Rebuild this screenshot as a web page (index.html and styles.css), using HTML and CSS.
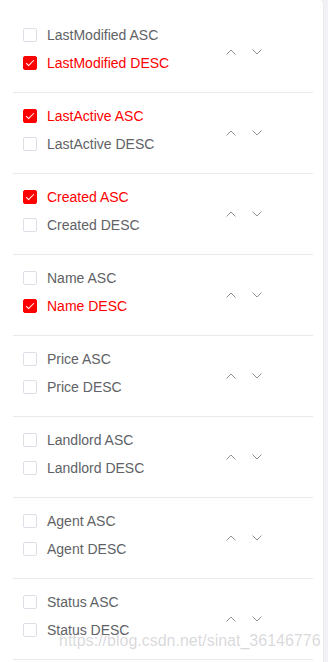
FILE: index.html
```html
<!DOCTYPE html>
<html>
<head>
<meta charset="utf-8">
<link rel="stylesheet" href="styles.css">
</head>
<body>
<div class="panel">
  <div class="group">
    <div class="options">
      <label class="opt"><span class="box"></span><span class="txt">LastModified ASC</span></label>
      <label class="opt on"><span class="box"></span><span class="txt">LastModified DESC</span></label>
    </div>
    <div class="arrows">
      <svg class="arr" viewBox="0 0 10 6"><path d="M0.5 5.5 L5 1 L9.5 5.5"/></svg>
      <svg class="arr" viewBox="0 0 10 6"><path d="M0.5 0.5 L5 5 L9.5 0.5"/></svg>
    </div>
  </div>
  <div class="group">
    <div class="options">
      <label class="opt on"><span class="box"></span><span class="txt">LastActive ASC</span></label>
      <label class="opt"><span class="box"></span><span class="txt">LastActive DESC</span></label>
    </div>
    <div class="arrows">
      <svg class="arr" viewBox="0 0 10 6"><path d="M0.5 5.5 L5 1 L9.5 5.5"/></svg>
      <svg class="arr" viewBox="0 0 10 6"><path d="M0.5 0.5 L5 5 L9.5 0.5"/></svg>
    </div>
  </div>
  <div class="group">
    <div class="options">
      <label class="opt on"><span class="box"></span><span class="txt">Created ASC</span></label>
      <label class="opt"><span class="box"></span><span class="txt">Created DESC</span></label>
    </div>
    <div class="arrows">
      <svg class="arr" viewBox="0 0 10 6"><path d="M0.5 5.5 L5 1 L9.5 5.5"/></svg>
      <svg class="arr" viewBox="0 0 10 6"><path d="M0.5 0.5 L5 5 L9.5 0.5"/></svg>
    </div>
  </div>
  <div class="group">
    <div class="options">
      <label class="opt"><span class="box"></span><span class="txt">Name ASC</span></label>
      <label class="opt on"><span class="box"></span><span class="txt">Name DESC</span></label>
    </div>
    <div class="arrows">
      <svg class="arr" viewBox="0 0 10 6"><path d="M0.5 5.5 L5 1 L9.5 5.5"/></svg>
      <svg class="arr" viewBox="0 0 10 6"><path d="M0.5 0.5 L5 5 L9.5 0.5"/></svg>
    </div>
  </div>
  <div class="group">
    <div class="options">
      <label class="opt"><span class="box"></span><span class="txt">Price ASC</span></label>
      <label class="opt"><span class="box"></span><span class="txt">Price DESC</span></label>
    </div>
    <div class="arrows">
      <svg class="arr" viewBox="0 0 10 6"><path d="M0.5 5.5 L5 1 L9.5 5.5"/></svg>
      <svg class="arr" viewBox="0 0 10 6"><path d="M0.5 0.5 L5 5 L9.5 0.5"/></svg>
    </div>
  </div>
  <div class="group">
    <div class="options">
      <label class="opt"><span class="box"></span><span class="txt">Landlord ASC</span></label>
      <label class="opt"><span class="box"></span><span class="txt">Landlord DESC</span></label>
    </div>
    <div class="arrows">
      <svg class="arr" viewBox="0 0 10 6"><path d="M0.5 5.5 L5 1 L9.5 5.5"/></svg>
      <svg class="arr" viewBox="0 0 10 6"><path d="M0.5 0.5 L5 5 L9.5 0.5"/></svg>
    </div>
  </div>
  <div class="group">
    <div class="options">
      <label class="opt"><span class="box"></span><span class="txt">Agent ASC</span></label>
      <label class="opt"><span class="box"></span><span class="txt">Agent DESC</span></label>
    </div>
    <div class="arrows">
      <svg class="arr" viewBox="0 0 10 6"><path d="M0.5 5.5 L5 1 L9.5 5.5"/></svg>
      <svg class="arr" viewBox="0 0 10 6"><path d="M0.5 0.5 L5 5 L9.5 0.5"/></svg>
    </div>
  </div>
  <div class="group">
    <div class="options">
      <label class="opt"><span class="box"></span><span class="txt">Status ASC</span></label>
      <label class="opt"><span class="box"></span><span class="txt">Status DESC</span></label>
    </div>
    <div class="arrows">
      <svg class="arr" viewBox="0 0 10 6"><path d="M0.5 5.5 L5 1 L9.5 5.5"/></svg>
      <svg class="arr" viewBox="0 0 10 6"><path d="M0.5 0.5 L5 5 L9.5 0.5"/></svg>
    </div>
  </div>
  <div class="watermark">https://blog.csdn.net/sinat_36146776</div>
</div>
</body>
</html>
```

FILE: styles.css
```css
html, body {
  margin: 0;
  padding: 0;
  background: #f2f2f6;
  height: 100%;
  overflow: hidden;
}

body {
  font-family: "Liberation Sans", Arial, sans-serif;
  font-size: 14px;
}

.panel {
  position: relative;
  width: 324px;
  height: 662px;
  box-sizing: border-box;
  background: #fff;
  border-radius: 0 4px 0 0;
  border-right: 1px solid #e9e9ee;
  padding-top: 12px;
}

.group {
  display: flex;
  align-items: center;
  margin: 0 10px 0 13px;
  padding: 9px 0 15px 10px;
  border-bottom: 1px solid #e8e9ee;
}

.options {
  flex: 0 0 203px;
  display: flex;
  flex-direction: column;
}

.opt {
  display: flex;
  align-items: center;
  height: 28px;
  color: #606266;
  cursor: pointer;
}

.opt.on {
  color: #ff0000;
}

.box {
  position: relative;
  width: 14px;
  height: 14px;
  box-sizing: border-box;
  border: 1px solid #dcdfe6;
  border-radius: 2px;
  background: #fff;
  margin-right: 10px;
  flex: 0 0 auto;
}

.opt.on .box {
  background: #ff0000;
  border-color: #ff0000;
}

.opt.on .box::after {
  content: "";
  position: absolute;
  box-sizing: content-box;
  left: 4px;
  top: 1px;
  width: 3px;
  height: 7px;
  border: 1px solid #fff;
  border-left: 0;
  border-top: 0;
  transform: rotate(45deg);
}

.txt {
  line-height: 28px;
}

.arrows {
  display: flex;
  gap: 16px;
  padding-top: 6px;
}

.arr {
  width: 10px;
  height: 6px;
  display: block;
}

.arr path {
  fill: none;
  stroke: #909399;
  stroke-width: 1;
}

.watermark {
  position: absolute;
  left: 59px;
  top: 632px;
  font-size: 16px;
  color: rgba(170, 170, 175, 0.45);
  white-space: nowrap;
  pointer-events: none;
}
```
